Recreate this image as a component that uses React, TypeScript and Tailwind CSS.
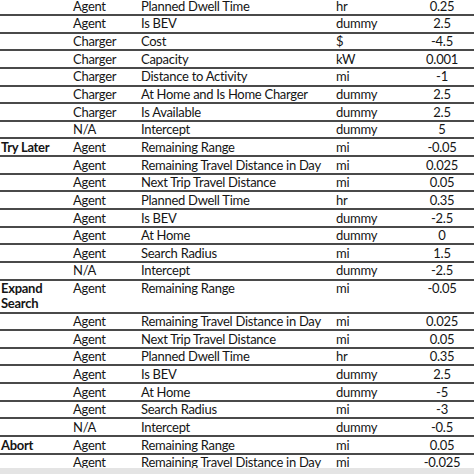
import React from "react";

type Row = {
  g?: string;
  e: string;
  v: string;
  u: string;
  c: string;
  tall?: boolean;
};

const rows: Row[] = [
  { e: "Agent", v: "Planned Dwell Time", u: "hr", c: "0.25" },
  { e: "Agent", v: "Is BEV", u: "dummy", c: "2.5" },
  { e: "Charger", v: "Cost", u: "$", c: "-4.5" },
  { e: "Charger", v: "Capacity", u: "kW", c: "0.001" },
  { e: "Charger", v: "Distance to Activity", u: "mi", c: "-1" },
  { e: "Charger", v: "At Home and Is Home Charger", u: "dummy", c: "2.5" },
  { e: "Charger", v: "Is Available", u: "dummy", c: "2.5" },
  { e: "N/A", v: "Intercept", u: "dummy", c: "5" },
  { g: "Try Later", e: "Agent", v: "Remaining Range", u: "mi", c: "-0.05" },
  { e: "Agent", v: "Remaining Travel Distance in Day", u: "mi", c: "0.025" },
  { e: "Agent", v: "Next Trip Travel Distance", u: "mi", c: "0.05" },
  { e: "Agent", v: "Planned Dwell Time", u: "hr", c: "0.35" },
  { e: "Agent", v: "Is BEV", u: "dummy", c: "-2.5" },
  { e: "Agent", v: "At Home", u: "dummy", c: "0" },
  { e: "Agent", v: "Search Radius", u: "mi", c: "1.5" },
  { e: "N/A", v: "Intercept", u: "dummy", c: "-2.5" },
  { g: "Expand Search", e: "Agent", v: "Remaining Range", u: "mi", c: "-0.05", tall: true },
  { e: "Agent", v: "Remaining Travel Distance in Day", u: "mi", c: "0.025" },
  { e: "Agent", v: "Next Trip Travel Distance", u: "mi", c: "0.05" },
  { e: "Agent", v: "Planned Dwell Time", u: "hr", c: "0.35" },
  { e: "Agent", v: "Is BEV", u: "dummy", c: "2.5" },
  { e: "Agent", v: "At Home", u: "dummy", c: "-5" },
  { e: "Agent", v: "Search Radius", u: "mi", c: "-3" },
  { e: "N/A", v: "Intercept", u: "dummy", c: "-0.5" },
  { g: "Abort", e: "Agent", v: "Remaining Range", u: "mi", c: "0.05" },
  { e: "Agent", v: "Remaining Travel Distance in Day", u: "mi", c: "-0.025" },
];

export default function App() {
  return (
    <div
      className="w-[474px] h-[474px] flex flex-col bg-white text-[#151515] overflow-hidden"
      style={{ fontFamily: "Lato, 'Open Sans', sans-serif" }}
    >
      <div className="h-[468px] overflow-hidden">
        <div className="-mt-[1.7px] flex flex-col text-[13px] leading-[15px] tracking-[-0.28px]">
          {rows.map((r, i) => (
            <div
              key={i}
              className={`grid grid-cols-[71px_68px_195px_76px_1fr] pt-[0.5px] border-b-2 border-[#4a4a4a] ${
                r.tall ? "h-[33px]" : "h-[17.65px]"
              }`}
            >
              <div className="pl-[1px] font-bold">
                {r.g === "Expand Search" ? (
                  <>
                    Expand
                    <br />
                    Search
                  </>
                ) : (
                  r.g
                )}
              </div>
              <div className="pl-[2px]">{r.e}</div>
              <div className="pl-[2px]">{r.v}</div>
              <div className="pl-[2px]">{r.u}</div>
              <div className="text-center">{r.c}</div>
            </div>
          ))}
        </div>
      </div>
      <div className="flex-1 bg-[#e4e4e4]" />
    </div>
  );
}
